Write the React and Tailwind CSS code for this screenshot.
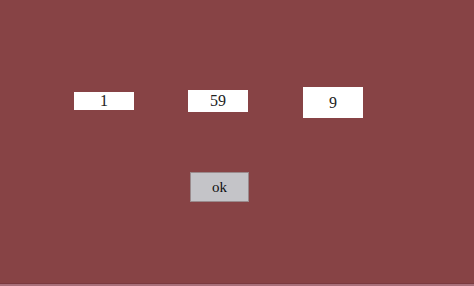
export default function App() {
  const serif = { fontFamily: '"Liberation Serif", "DejaVu Serif", serif' };
  return (
    <div className="w-[474px] h-[286px] flex flex-col bg-[#874345] overflow-hidden" style={serif}>
      <div className="flex-1 flex flex-col">
        <div className="flex items-start pt-[87px] pl-[74px]">
          <div className="mt-[5px] w-[60px] h-[18px] bg-white flex items-center justify-center text-[16px] leading-none text-[#222]">1</div>
          <div className="mt-[3px] ml-[54px] w-[60px] h-[22px] bg-white flex items-center justify-center text-[16px] leading-none text-[#222]">59</div>
          <div className="ml-[55px] w-[60px] h-[31px] bg-white flex items-center justify-center text-[16px] leading-none text-[#222]">9</div>
        </div>
        <div className="pl-[190px] mt-[54px]">
          <div className="w-[59px] h-[30px] bg-[#c4c4c8] border border-[#9a8a8c] flex items-center justify-center text-[15px] leading-none text-[#111]">ok</div>
        </div>
      </div>
      <div className="h-[1px] bg-[#7a3a3e]" />
      <div className="h-[2px] bg-[#a8707a]" />
    </div>
  );
}
